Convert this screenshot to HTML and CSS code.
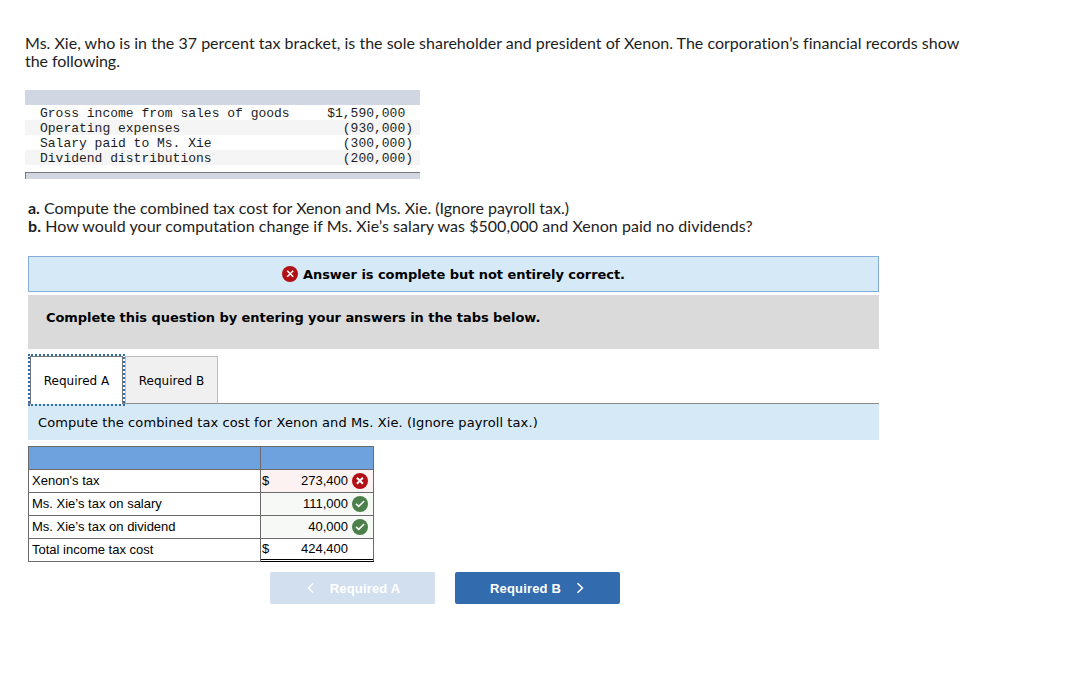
FILE: index.html
```html
<!DOCTYPE html>
<html lang="en">
<head>
    <meta charset="UTF-8">
    <meta name="viewport" content="width=device-width, initial-scale=1.0">
    <title>Xenon Tax Cost</title>
    <link rel="stylesheet" href="styles.css">
</head>
<body>
    <p class="intro"><span class="line-1">Ms. Xie, who is in the 37 percent tax bracket, is the sole shareholder and president of Xenon. The corporation’s financial records show</span><br><span class="line-2">the following.</span></p>

    <table class="records">
        <thead>
            <tr><th colspan="2"></th></tr>
        </thead>
        <tbody>
            <tr><td>Gross income from sales of goods</td><td class="amount">$1,590,000&nbsp;</td></tr>
            <tr><td>Operating expenses</td><td class="amount">(930,000)</td></tr>
            <tr><td>Salary paid to Ms. Xie</td><td class="amount">(300,000)</td></tr>
            <tr><td>Dividend distributions</td><td class="amount">(200,000)</td></tr>
        </tbody>
    </table>
    <div class="records-footer"></div>

    <div class="questions">
        <div class="question-a"><b>a.</b> Compute the combined tax cost for Xenon and Ms. Xie. (Ignore payroll tax.)</div>
        <div class="question-b"><b>b.</b> How would your computation change if Ms. Xie’s salary was $500,000 and Xenon paid no dividends?</div>
    </div>

    <div class="worksheet">
        <div class="status">
            <svg class="mark" viewBox="0 0 16 16"><circle cx="8" cy="8" r="8" fill="#b11116"/><path d="M5.2 4.7l6 6M11.2 4.7l-6 6" stroke="#fff" stroke-width="1.6" fill="none"/></svg>
            <span>Answer is complete but not entirely correct.</span>
        </div>
        <div class="instructions"><span>Complete this question by entering your answers in the tabs below.</span></div>

        <div class="tabs">
            <div class="tab active"><span>Required A</span></div>
            <div class="tab"><span>Required B</span></div>
        </div>
        <div class="tab-text"><span>Compute the combined tax cost for Xenon and Ms. Xie. (Ignore payroll tax.)</span></div>

        <table class="answers">
            <tr class="head"><td></td><td></td></tr>
            <tr>
                <td>Xenon's tax</td>
                <td class="wrong"><div class="cell"><span>$</span><span class="num">273,400</span><svg class="mark" viewBox="0 0 16 16"><circle cx="8" cy="8" r="8" fill="#b11116"/><path d="M4.9 4.7l6 6M10.9 4.7l-6 6" stroke="#fff" stroke-width="2" fill="none"/></svg></div></td>
            </tr>
            <tr>
                <td>Ms. Xie’s tax on salary</td>
                <td class="right"><div class="cell"><span class="num">111,000</span><svg class="mark" viewBox="0 0 16 16"><circle cx="8" cy="8" r="8" fill="#4b804b"/><path d="M4 7.8l2.7 2.6L12.2 5" stroke="#fff" stroke-width="1.6" fill="none"/></svg></div></td>
            </tr>
            <tr>
                <td>Ms. Xie’s tax on dividend</td>
                <td class="right"><div class="cell"><span class="num">40,000</span><svg class="mark" viewBox="0 0 16 16"><circle cx="8" cy="8" r="8" fill="#4b804b"/><path d="M4 7.8l2.7 2.6L12.2 5" stroke="#fff" stroke-width="1.6" fill="none"/></svg></div></td>
            </tr>
            <tr>
                <td>Total income tax cost</td>
                <td class="total"><div class="cell"><span>$</span><span class="num">424,400</span></div></td>
            </tr>
        </table>

        <div class="nav">
            <button class="prev" disabled><svg class="arrow" viewBox="0 0 8 12"><path d="M6 1.5L1.5 6 6 10.5" stroke="#fff" stroke-width="1.3" fill="none"/></svg><span>Required A</span></button>
            <button class="next"><span>Required B</span><svg class="arrow" viewBox="0 0 8 12"><path d="M1.5 1.2L6.5 6l-5 4.8" stroke="#fff" stroke-width="1.5" fill="none"/></svg></button>
        </div>
    </div>
</body>
</html>
```
FILE: styles.css
```css
* {
    box-sizing: border-box;
}
body {
    margin: 0;
    padding: 34px 25px 0;
    background: #fff;
    color: #1d1d1d;
    font-family: "Liberation Sans", Arial, sans-serif;
    font-size: 13px;
}
.intro, .questions {
    margin: 0;
    font-family: Lato, sans-serif;
    font-size: 16px;
    line-height: 18px;
    font-variant-ligatures: none;
    white-space: nowrap;
}
.line-1 {
    letter-spacing: 0.015px;
}
.line-2 {
    letter-spacing: -0.05px;
}
.question-b {
    letter-spacing: 0.05px;
}
table {
    border-collapse: collapse;
    table-layout: fixed;
}
td, th {
    padding: 0;
}

/* financial records */
.records {
    width: 395px;
    margin-top: 20px;
    font: 13px/13px "Liberation Mono", "Courier New", monospace;
}
.records th {
    height: 15px;
    background: #d0d6e2;
}
.records td {
    height: 15px;
    padding: 2px 0 0 15px;
    white-space: nowrap;
}
.records .amount {
    width: 125px;
    padding: 2px 7px 0 0;
    text-align: right;
}
.records tbody tr:nth-child(even) {
    background: #f5f5f5;
}
.records-footer {
    width: 395px;
    height: 7px;
    margin-top: 7px;
    background: #d0d6e2;
    border-top: 1px solid #777a82;
    border-left: 1px solid #777a82;
}

.questions {
    margin: 20px 0 0 3px;
}

/* worksheet */
.worksheet {
    width: 851px;
    margin: 21px 0 0 3px;
    color: #000;
}
.mark {
    width: 16px;
    height: 16px;
    flex: none;
}
.status {
    display: flex;
    align-items: center;
    justify-content: center;
    gap: 5px;
    height: 36px;
    background: #d5e9f7;
    border: 1px solid #85addb;
    font: bold 13px "DejaVu Sans", Verdana, sans-serif;
    letter-spacing: -0.06px;
}
.instructions {
    height: 54px;
    margin-top: 3px;
    padding: 15px 18px;
    background: #dadada;
    font: bold 13px/16px "DejaVu Sans", Verdana, sans-serif;
    letter-spacing: -0.06px;
}
.tabs {
    display: flex;
    height: 51px;
    margin-top: 4px;
    padding-top: 3px;
    border-bottom: 1px solid #8a8a8a;
    font: 12px "DejaVu Sans", Verdana, sans-serif;
}
.tab {
    display: flex;
    align-items: center;
    justify-content: center;
    width: 93px;
    height: 48px;
    padding-top: 1px;
    background: #f0f0f0;
    border: 1px solid #bbb;
    border-bottom: 1px solid #8a8a8a;
}
.tab.active {
    position: relative;
    margin: 0 2px;
    padding-top: 0;
    background: #fff;
    border-color: #777;
    border-bottom: 0;
    outline: 2px dotted #2f6bb0;
}
.tab-text {
    height: 36px;
    padding: 11px 10px;
    background: #d5e9f7;
    font: 13px/16px "DejaVu Sans", Verdana, sans-serif;
    letter-spacing: 0.1px;
    white-space: nowrap;
}

/* answer table */
.answers {
    width: 346px;
    margin-top: 6px;
}
.answers td {
    height: 23px;
    padding: 0 0 2px 3px;
    line-height: 15px;
    border: 1px solid #6b6b6b;
    white-space: nowrap;
}
.answers td:last-child {
    width: 113px;
    padding: 0 5px 0 1px;
}
.answers .head td {
    background: #6ea2df;
}
.cell {
    display: flex;
    align-items: center;
    height: 16px;
}
.cell span {
    margin-top: -2px;
}
.num {
    flex: 1;
    margin-right: 4px;
    text-align: right;
}
.wrong {
    background: #fdf2f2;
}
.right {
    background: #f6f9f6;
}
/* double rule under the total */
.answers .total {
    border-top-color: #000;
    border-bottom-color: #000;
    box-shadow: inset 0 -1px #fff, inset 0 -2px #000;
}
.answers .total:last-child {
    padding: 0 21px 2px 1px;
}

.nav {
    display: flex;
    gap: 20px;
    margin: 10px 0 0 242px;
}
.nav button {
    display: flex;
    align-items: center;
    justify-content: center;
    gap: 15px;
    width: 165px;
    height: 32px;
    padding: 0;
    border: 0;
    border-radius: 2px;
    color: #fff;
    font: bold 13px "Liberation Sans", Arial, sans-serif;
    letter-spacing: 0.15px;
}
.nav .prev {
    padding-left: 2px;
    background: #d2dfee;
}
.nav .next {
    padding-right: 1px;
    background: #326bae;
}
.arrow {
    width: 8px;
    height: 12px;
}
```
